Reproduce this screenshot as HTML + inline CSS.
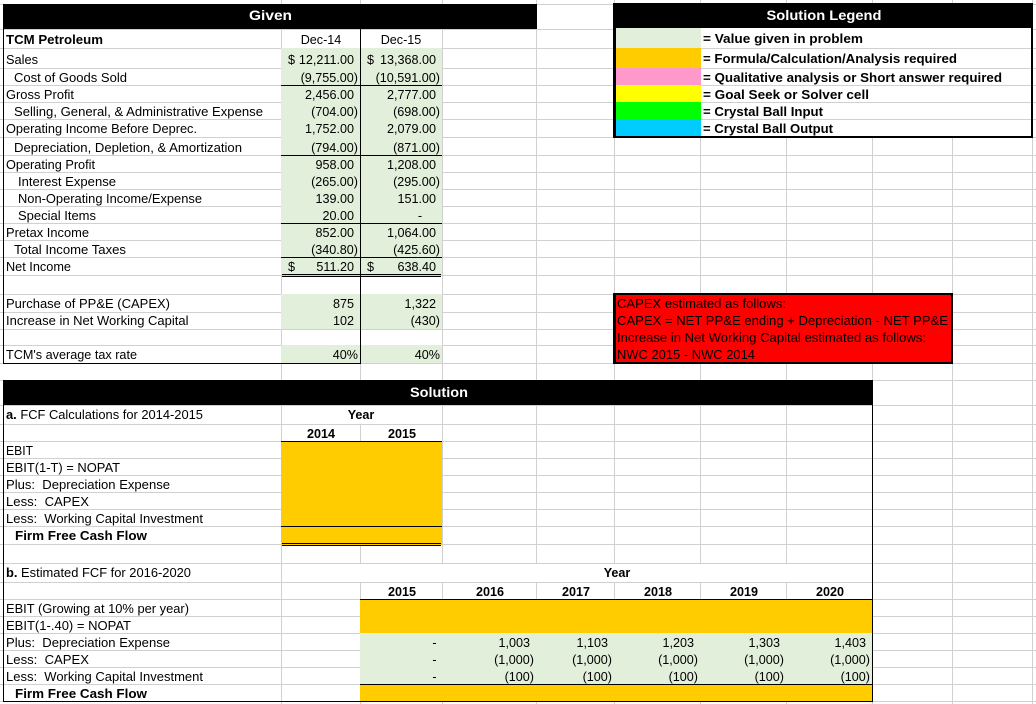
<!DOCTYPE html>
<html><head><meta charset="utf-8"><style>
html,body{margin:0;padding:0;background:#fff;width:1036px;height:704px;overflow:hidden}
svg{display:block}
text{font-family:"Liberation Sans",Arial,sans-serif;font-size:12.6px;fill:#000;white-space:pre}
.b{font-weight:bold}
.h{font-weight:bold;fill:#fff;font-size:14px;text-anchor:middle}
.c{text-anchor:middle}
.r{text-anchor:end}
.g{stroke:#d0d0d0;stroke-width:1}
</style></head><body>
<svg width="1036" height="704" viewBox="0 0 1036 704" shape-rendering="crispEdges">
<path class="g" fill="none" d="M0 4.5H1036M0 29.5H1036M0 48.5H1036M0 68.5H1036M0 85.5H1036M0 102.5H1036M0 119.5H1036M0 137.5H1036M0 155.5H1036M0 172.5H1036M0 189.5H1036M0 206.5H1036M0 223.5H1036M0 240.5H1036M0 257.5H1036M0 275.5H1036M0 294.5H1036M0 312.5H1036M0 329.5H1036M0 345.5H1036M0 363.5H1036M0 380.5H1036M0 405.5H1036M0 424.5H1036M0 441.5H1036M0 458.5H1036M0 475.5H1036M0 492.5H1036M0 509.5H1036M0 526.5H1036M0 544.5H1036M0 563.5H1036M0 582.5H1036M0 599.5H1036M0 616.5H1036M0 633.5H1036M0 650.5H1036M0 667.5H1036M0 684.5H1036M0 701.5H1036"/>
<path class="g" fill="none" d="M281.5 0V704M360.5 0V405M360.5 424V563M360.5 582V704M442.5 0V563M442.5 582V704M536.5 0V563M536.5 582V704M614.5 0V563M614.5 582V704M700.5 0V563M700.5 582V704M786.5 0V563M786.5 582V704M872.5 0V704M952.5 0V704M1032.5 0V704"/>

<!-- Given -->
<rect x="281" y="48" width="161" height="227" fill="#e2efda"/>
<rect x="281" y="294" width="161" height="35" fill="#e2efda"/>
<rect x="281" y="345" width="161" height="18" fill="#e2efda"/>
<rect x="3" y="4" width="534" height="25" fill="#000"/>
<rect x="3" y="29" width="1" height="335" fill="#000"/>
<rect x="360" y="29" width="1" height="335" fill="#000"/>
<rect x="3" y="363" width="358" height="1" fill="#000"/>
<rect x="281" y="85" width="161" height="1" fill="#000"/>
<rect x="281" y="155" width="161" height="1" fill="#000"/>
<rect x="281" y="223" width="161" height="1" fill="#000"/>
<rect x="281" y="257" width="161" height="1" fill="#000"/>
<rect x="282" y="274" width="159" height="1" fill="#000"/>
<rect x="282" y="276" width="159" height="1" fill="#000"/>

<!-- Legend -->
<rect x="613" y="3" width="420" height="135" fill="#000"/>
<rect x="616" y="28" width="415" height="108" fill="#fff"/>
<path class="g" fill="none" d="M701 48.5H1031M701 68.5H1031M701 85.5H1031M701 102.5H1031M701 119.5H1031"/>
<rect x="616" y="28" width="85" height="20" fill="#e2efda"/>
<rect x="616" y="48" width="85" height="20" fill="#ffcc00"/>
<rect x="616" y="68" width="85" height="17" fill="#ff99cc"/>
<rect x="616" y="85" width="85" height="17" fill="#ffff00"/>
<rect x="616" y="102" width="85" height="17" fill="#00ff00"/>
<rect x="616" y="119" width="85" height="17" fill="#00ccff"/>

<!-- Red box -->
<rect x="613" y="293" width="340" height="71" fill="#000"/>
<rect x="616" y="295" width="335" height="67" fill="#ff0000"/>

<!-- Solution -->
<rect x="3" y="380" width="870" height="25" fill="#000"/>
<rect x="3" y="405" width="1" height="297" fill="#000"/>
<rect x="872" y="405" width="1" height="297" fill="#000"/>
<rect x="3" y="701" width="870" height="1" fill="#000"/>
<rect x="281" y="441" width="161" height="104" fill="#ffcc00"/>
<rect x="281" y="441" width="161" height="1" fill="#000"/>
<rect x="281" y="526" width="161" height="1" fill="#000"/>
<rect x="282" y="543" width="159" height="1" fill="#000"/>
<rect x="282" y="545" width="159" height="1" fill="#000"/>
<rect x="360" y="599" width="512" height="34" fill="#ffcc00"/>
<rect x="360" y="633" width="512" height="51" fill="#e2efda"/>
<rect x="360" y="684" width="512" height="17" fill="#ffcc00"/>
<rect x="360" y="599" width="512" height="1" fill="#000"/>
<rect x="360" y="684" width="512" height="1" fill="#000"/>

<g lengthAdjust="spacingAndGlyphs" shape-rendering="auto">
<text class="h" x="270.5" y="20" textLength="43" lengthAdjust="spacingAndGlyphs">Given</text>
<text class="h" x="824" y="20" textLength="115" lengthAdjust="spacingAndGlyphs">Solution Legend</text>
<text class="h" x="439" y="397" textLength="58" lengthAdjust="spacingAndGlyphs">Solution</text>

<text class="b" x="6" y="44" textLength="97" lengthAdjust="spacingAndGlyphs">TCM Petroleum</text>
<text class="c" x="321" y="44">Dec-14</text><text class="c" x="401" y="44">Dec-15</text>
<text x="6" y="64" textLength="32" lengthAdjust="spacingAndGlyphs">Sales</text>
<text x="14" y="82" textLength="113" lengthAdjust="spacingAndGlyphs">Cost of Goods Sold</text>
<text x="6" y="99" textLength="68" lengthAdjust="spacingAndGlyphs">Gross Profit</text>
<text x="14" y="116" textLength="249" lengthAdjust="spacingAndGlyphs">Selling, General, &amp; Administrative Expense</text>
<text x="6" y="133" textLength="191" lengthAdjust="spacingAndGlyphs">Operating Income Before Deprec.</text>
<text x="14" y="152" textLength="228" lengthAdjust="spacingAndGlyphs">Depreciation, Depletion, &amp; Amortization</text>
<text x="6" y="169" textLength="89" lengthAdjust="spacingAndGlyphs">Operating Profit</text>
<text x="18" y="186" textLength="98" lengthAdjust="spacingAndGlyphs">Interest Expense</text>
<text x="18" y="203" textLength="184" lengthAdjust="spacingAndGlyphs">Non-Operating Income/Expense</text>
<text x="18" y="220" textLength="78" lengthAdjust="spacingAndGlyphs">Special Items</text>
<text x="6" y="237" textLength="83" lengthAdjust="spacingAndGlyphs">Pretax Income</text>
<text x="14" y="254" textLength="112" lengthAdjust="spacingAndGlyphs">Total Income Taxes</text>
<text x="6" y="271" textLength="65" lengthAdjust="spacingAndGlyphs">Net Income</text>

<text x="288" y="64">$</text><text class="r" x="354" y="64">12,211.00</text>
<text x="367" y="64">$</text><text class="r" x="436" y="64">13,368.00</text>
<text class="r" x="358" y="82">(9,755.00)</text><text class="r" x="440" y="82">(10,591.00)</text>
<text class="r" x="354" y="99">2,456.00</text><text class="r" x="436" y="99">2,777.00</text>
<text class="r" x="358" y="116">(704.00)</text><text class="r" x="440" y="116">(698.00)</text>
<text class="r" x="354" y="133">1,752.00</text><text class="r" x="436" y="133">2,079.00</text>
<text class="r" x="358" y="152">(794.00)</text><text class="r" x="440" y="152">(871.00)</text>
<text class="r" x="354" y="169">958.00</text><text class="r" x="436" y="169">1,208.00</text>
<text class="r" x="358" y="186">(265.00)</text><text class="r" x="440" y="186">(295.00)</text>
<text class="r" x="354" y="203">139.00</text><text class="r" x="436" y="203">151.00</text>
<text class="r" x="354" y="220">20.00</text><text class="c" x="420" y="220">-</text>
<text class="r" x="354" y="237">852.00</text><text class="r" x="436" y="237">1,064.00</text>
<text class="r" x="358" y="254">(340.80)</text><text class="r" x="440" y="254">(425.60)</text>
<text x="288" y="271">$</text><text class="r" x="354" y="271">511.20</text>
<text x="367" y="271">$</text><text class="r" x="436" y="271">638.40</text>

<text x="6" y="308" textLength="164" lengthAdjust="spacingAndGlyphs">Purchase of PP&amp;E (CAPEX)</text>
<text x="6" y="325" textLength="182.5" lengthAdjust="spacingAndGlyphs">Increase in Net Working Capital</text>
<text x="6" y="359" textLength="131" lengthAdjust="spacingAndGlyphs">TCM's average tax rate</text>
<text class="r" x="354" y="308">875</text><text class="r" x="436" y="308">1,322</text>
<text class="r" x="354" y="325">102</text><text class="r" x="440" y="325">(430)</text>
<text class="r" x="358" y="359">40%</text><text class="r" x="440" y="359">40%</text>

<text x="703" y="43" class="b" textLength="160" lengthAdjust="spacingAndGlyphs">= Value given in problem</text>
<text x="703" y="63" class="b" textLength="254" lengthAdjust="spacingAndGlyphs">= Formula/Calculation/Analysis required</text>
<text x="703" y="82" class="b" textLength="299" lengthAdjust="spacingAndGlyphs">= Qualitative analysis or Short answer required</text>
<text x="703" y="99" class="b" textLength="166" lengthAdjust="spacingAndGlyphs">= Goal Seek or Solver cell</text>
<text x="703" y="116" class="b" textLength="120" lengthAdjust="spacingAndGlyphs">= Crystal Ball Input</text>
<text x="703" y="133" class="b" textLength="130" lengthAdjust="spacingAndGlyphs">= Crystal Ball Output</text>

<text x="617" y="308" textLength="169" lengthAdjust="spacingAndGlyphs">CAPEX estimated as follows:</text>
<text x="617" y="325" textLength="331" lengthAdjust="spacingAndGlyphs">CAPEX = NET PP&amp;E ending + Depreciation - NET PP&amp;E</text>
<text x="617" y="342" textLength="309" lengthAdjust="spacingAndGlyphs">Increase in Net Working Capital estimated as follows:</text>
<text x="617" y="359" textLength="138" lengthAdjust="spacingAndGlyphs">NWC 2015 - NWC 2014</text>

<text x="6" y="419" textLength="197" lengthAdjust="spacingAndGlyphs"><tspan class="b">a.</tspan> FCF Calculations for 2014-2015</text>
<text class="b c" x="361" y="419">Year</text>
<text class="b c" x="321" y="438">2014</text><text class="b c" x="402" y="438">2015</text>
<text x="6" y="455" textLength="27" lengthAdjust="spacingAndGlyphs">EBIT</text>
<text x="6" y="472" textLength="114" lengthAdjust="spacingAndGlyphs">EBIT(1-T) = NOPAT</text>
<text x="6" y="489" textLength="164" lengthAdjust="spacingAndGlyphs">Plus:  Depreciation Expense</text>
<text x="6" y="506" textLength="83" lengthAdjust="spacingAndGlyphs">Less:  CAPEX</text>
<text x="6" y="523" textLength="197" lengthAdjust="spacingAndGlyphs">Less:  Working Capital Investment</text>
<text class="b" x="15" y="540" textLength="132" lengthAdjust="spacingAndGlyphs">Firm Free Cash Flow</text>

<text x="6" y="577" textLength="185" lengthAdjust="spacingAndGlyphs"><tspan class="b">b.</tspan> Estimated FCF for 2016-2020</text>
<text class="b c" x="617" y="577">Year</text>
<text class="b c" x="402" y="596">2015</text>
<text class="b c" x="490" y="596">2016</text>
<text class="b c" x="576" y="596">2017</text>
<text class="b c" x="658" y="596">2018</text>
<text class="b c" x="744" y="596">2019</text>
<text class="b c" x="830" y="596">2020</text>
<text x="6" y="613" textLength="183" lengthAdjust="spacingAndGlyphs">EBIT (Growing at 10% per year)</text>
<text x="6" y="630" textLength="125" lengthAdjust="spacingAndGlyphs">EBIT(1-.40) = NOPAT</text>
<text x="6" y="647" textLength="164" lengthAdjust="spacingAndGlyphs">Plus:  Depreciation Expense</text>
<text x="6" y="664" textLength="83" lengthAdjust="spacingAndGlyphs">Less:  CAPEX</text>
<text x="6" y="681" textLength="197" lengthAdjust="spacingAndGlyphs">Less:  Working Capital Investment</text>
<text class="b" x="15" y="698" textLength="132" lengthAdjust="spacingAndGlyphs">Firm Free Cash Flow</text>

<text class="c" x="434.5" y="647">-</text><text class="c" x="434.5" y="664">-</text><text class="c" x="434.5" y="681">-</text>
<text class="r" x="530" y="647">1,003</text><text class="r" x="534" y="664">(1,000)</text><text class="r" x="534" y="681">(100)</text>
<text class="r" x="608" y="647">1,103</text><text class="r" x="612" y="664">(1,000)</text><text class="r" x="612" y="681">(100)</text>
<text class="r" x="694" y="647">1,203</text><text class="r" x="698" y="664">(1,000)</text><text class="r" x="698" y="681">(100)</text>
<text class="r" x="780" y="647">1,303</text><text class="r" x="784" y="664">(1,000)</text><text class="r" x="784" y="681">(100)</text>
<text class="r" x="866" y="647">1,403</text><text class="r" x="870" y="664">(1,000)</text><text class="r" x="870" y="681">(100)</text>
</g>
</svg>
</body></html>
